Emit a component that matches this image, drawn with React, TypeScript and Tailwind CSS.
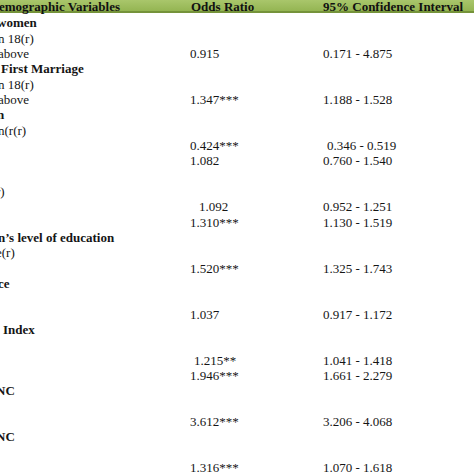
import React from 'react';

type Row = {
  label?: string;
  bold?: boolean;
  labelClass?: string;
  ratio?: string;
  ratioClass?: string;
  ci?: string;
  ciClass?: string;
};

// rows follow a fixed ~15.33px grid, empty rows keep spacing
const rows: Row[] = [
  { label: 'women', bold: true, labelClass: '-ml-[3px]' },
  { label: 'n 18(r)', labelClass: '-ml-[2px]' },
  { label: 'above', labelClass: '-ml-[2px]', ratio: '0.915', ci: '0.171 - 4.875' },
  { label: 'First Marriage', bold: true, labelClass: 'ml-[1px]' },
  { label: 'n 18(r)', labelClass: '-ml-[2px]' },
  { label: 'above', labelClass: '-ml-[2px]', ratio: '1.347***', ci: '1.188 - 1.528' },
  { label: 'n', bold: true, labelClass: '-ml-[3px]' },
  { label: 'n(r(r)', labelClass: '-ml-[2px]' },
  { ratio: '0.424***', ci: '0.346 - 0.519', ciClass: 'pl-[4px]' },
  { ratio: '1.082', ci: '0.760 - 1.540' },
  {},
  { label: 'r)', labelClass: '-ml-[4px]' },
  { ratio: '1.092', ratioClass: 'pl-[9px]', ci: '0.952 - 1.251' },
  { ratio: '1.310***', ci: '1.130 - 1.519' },
  { label: 'n\u2019s level of education', bold: true, labelClass: '-ml-[2px]' },
  { label: 'e(r)', labelClass: '-ml-[4px]' },
  { ratio: '1.520***', ci: '1.325 - 1.743' },
  { label: 'ce', bold: true, labelClass: '-ml-[2px]' },
  {},
  { ratio: '1.037', ci: '0.917 - 1.172' },
  { label: 'Index', bold: true, labelClass: 'ml-[3px]' },
  {},
  { ratio: '1.215**', ratioClass: 'pl-[4px]', ci: '1.041 - 1.418' },
  { ratio: '1.946***', ci: '1.661 - 2.279' },
  { label: 'NC', bold: true, labelClass: '-ml-[4px]' },
  {},
  { ratio: '3.612***', ci: '3.206 - 4.068' },
  { label: 'NC', bold: true, labelClass: '-ml-[4px]' },
  {},
  { ratio: '1.316***', ci: '1.070 - 1.618' },
];

export default function App() {
  return (
    <div
      className="w-[474px] h-[474px] overflow-hidden bg-white text-[#151515] text-[13px]"
      style={{ fontFamily: '"Liberation Serif", "Times New Roman", serif' }}
    >
      {/* header bar */}
      <div className="h-[13px] grid grid-cols-[190px_133px_1fr] bg-gradient-to-b from-[#a9c66b] to-[#94b552] border-b-2 border-[#75933a] font-bold text-[#111]">
        <div className="-ml-[1px] whitespace-nowrap leading-[14px]">emographic Variables</div>
        <div className="pl-[1px] whitespace-nowrap leading-[14px]">Odds Ratio</div>
        <div className="whitespace-nowrap leading-[14px]">95% Confidence Interval</div>
      </div>

      <div className="mt-[2.33px]">
        {rows.map((row, i) => (
          <div key={i} className="grid grid-cols-[190px_133px_1fr] h-[15.33px] leading-[15.33px]">
            <div className={['whitespace-nowrap', row.bold ? 'font-bold' : '', row.labelClass ?? ''].join(' ')}>
              {row.label ?? ''}
            </div>
            <div className={['whitespace-nowrap', row.ratioClass ?? ''].join(' ')}>{row.ratio ?? ''}</div>
            <div className={['whitespace-nowrap', row.ciClass ?? ''].join(' ')}>{row.ci ?? ''}</div>
          </div>
        ))}
      </div>
    </div>
  );
}
